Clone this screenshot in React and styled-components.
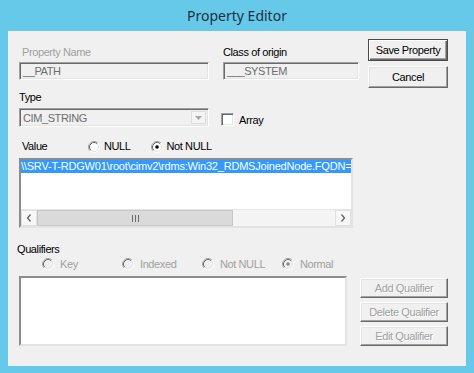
import React from "react";
import styled, { createGlobalStyle, css } from "styled-components";

const Global = createGlobalStyle`
  html, body { margin: 0; padding: 0; }
  body {
    width: 474px; height: 373px; overflow: hidden;
    background: #66c9e9;
    font-family: "Liberation Sans", Arial, sans-serif;
  }
`;

const sunken = css`
  box-sizing: border-box;
  border: 1px solid;
  border-color: #a0a0a0 #ffffff #ffffff #a0a0a0;
  box-shadow: inset 1px 1px 0 #696969, inset -1px -1px 0 #e3e3e3;
`;

const Window = styled.div`
  width: 474px; height: 373px; box-sizing: border-box;
  background: #66c9e9;
  display: flex; flex-direction: column;
  padding: 0 8px 7px 8px;
`;

const TitleBar = styled.div`
  height: 31px; box-sizing: border-box; padding-bottom: 1px;
  display: flex; align-items: center; justify-content: center;
  font-family: "Noto Sans", "Open Sans", sans-serif;
  font-size: 14px; color: #1c3140;
`;

const Client = styled.div`
  flex: 1; background: #f0f0f0;
  padding: 8px 18px 0 11px;
  display: flex; flex-direction: column;
  font-family: "Liberation Sans", Arial, sans-serif;
  font-size: 11px; letter-spacing: -0.4px; color: #000;
`;

const TopRow = styled.div`
  display: flex; align-items: flex-start;
`;

const FieldCol = styled.div`
  width: ${p => p.$w}px;
  margin-left: ${p => p.$ml || 0}px;
  margin-top: ${p => p.$mt || 0}px;
  display: flex; flex-direction: column;
`;

const Label = styled.div`
  line-height: 13px; height: 13px;
  color: ${p => (p.$disabled ? "#a0a0a0" : "#000")};
  padding-left: ${p => p.$indent || 0}px;
  margin-bottom: ${p => p.$mb ?? 3}px;
  white-space: nowrap;
`;

const TextBox = styled.div`
  ${sunken};
  height: 18px; background: #f0f0f0;
  color: #6d6d6d; line-height: 16px;
  padding: 0 3px;
  white-space: nowrap; overflow: hidden;
`;

const ButtonCol = styled.div`
  width: ${p => p.$w}px;
  margin-left: ${p => p.$ml}px;
  margin-top: ${p => p.$mt || 0}px;
  display: flex; flex-direction: column;
  gap: ${p => p.$gap}px;
`;

const Button = styled.button`
  box-sizing: border-box;
  width: 100%; height: ${p => p.$h}px;
  font: inherit; letter-spacing: inherit;
  padding: 0; margin: 0;
  background: #f0f0f0;
  color: ${p => (p.disabled ? "#a0a0a0" : "#000")};
  text-shadow: ${p => (p.disabled ? "1px 1px 0 #ffffff" : "none")};
  border: 1px solid;
  border-color: #ffffff #696969 #696969 #ffffff;
  box-shadow: inset -1px -1px 0 #a0a0a0, inset 1px 1px 0 #e3e3e3;
  ${p =>
    p.$default &&
    css`
      border-color: #4a4a4a;
      box-shadow: inset 1px 1px 0 #ffffff, inset -1px -1px 0 #696969,
        inset -2px -2px 0 #a0a0a0;
    `}
`;

const TypeRow = styled.div`
  display: flex; align-items: flex-end;
  margin-top: 3px;
`;

const Combo = styled.div`
  ${sunken};
  height: 19px; background: #f0f0f0;
  display: flex; align-items: stretch;
  padding: 2px;
`;

const ComboText = styled.div`
  flex: 1; color: #6d6d6d; line-height: 15px; padding-left: 1px;
`;

const ComboButton = styled.div`
  width: 15px; box-sizing: border-box;
  background: #f4f4f4;
  border: 1px solid #dcdcdc;
  display: flex; align-items: center; justify-content: center;
`;

const Check = styled.label`
  display: flex; align-items: center; gap: 5px;
  margin-left: 12px; margin-bottom: 1px;
`;

const CheckBox = styled.span`
  ${sunken};
  width: 13px; height: 13px; background: #ffffff; display: block;
`;

const ValueRow = styled.div`
  display: flex; align-items: center;
  margin-top: 13px; height: 13px; line-height: 13px;
  padding-left: 3px;
`;

const ValueLabel = styled.span`
  width: 66px;
`;

const Radio = styled.span`
  display: inline-flex; align-items: center; gap: ${p => p.$gap ?? 4}px;
  margin-right: ${p => p.$mr || 0}px;
  color: ${p => (p.$disabled ? "#a0a0a0" : "#000")};
  white-space: nowrap;
`;

const ValueBox = styled.div`
  box-sizing: border-box;
  margin-top: 5px;
  width: 334px; height: 70px;
  background: #ffffff;
  border: 2px solid;
  border-color: #8c8c8c #e3e3e3 #e3e3e3 #8c8c8c;
  display: flex; flex-direction: column;
`;

const ValueText = styled.div`
  flex: 1; overflow: hidden; white-space: nowrap;
`;

const Selected = styled.span`
  display: inline-block;
  background: #3399ff; color: #ffffff;
  line-height: 13px; height: 13px;
  letter-spacing: -0.2px;
`;

const HScroll = styled.div`
  height: 17px; display: flex; background: #f4f4f4;
  border-top: 1px solid #e6e6e6; box-sizing: border-box;
`;

const ScrollBtn = styled.div`
  width: 16px; box-sizing: border-box;
  border: 1px solid #e0e0e0; background: #f7f7f7;
  display: flex; align-items: center; justify-content: center;
`;

const Thumb = styled.div`
  width: 196px; box-sizing: border-box;
  background: #dadada; border: 1px solid #c6c6c6;
  display: flex; align-items: center; justify-content: center; gap: 2px;
`;

const Grip = styled.span`
  width: 1px; height: 7px; background: #6a6a6a; display: block;
`;

const Track = styled.div`
  flex: 1;
`;

const QualLabel = styled.div`
  margin-top: 15px; margin-left: -2px;
  line-height: 13px; height: 13px;
`;

const QualRadios = styled.div`
  display: grid; grid-template-columns: repeat(4, 80px);
  padding-left: 23px; margin-top: 2px;
  height: 12px; line-height: 12px;
`;

const QualRow = styled.div`
  display: flex; align-items: flex-start;
  margin-top: 6px;
`;

const ListBox = styled.div`
  box-sizing: border-box;
  width: 328px; height: 70px;
  background: #ffffff;
  border: 2px solid;
  border-color: #8c8c8c #e3e3e3 #e3e3e3 #8c8c8c;
`;

const RadioIcon = ({ checked, disabled }) => (
  <svg width="12" height="12" viewBox="0 0 12 12" style={{ display: "block" }}>
    <circle cx="6" cy="6" r="4.5" fill={disabled ? "#f0f0f0" : "#ffffff"} />
    <path d="M2.11 9.89 A5.5 5.5 0 0 1 9.89 2.11" stroke="#a0a0a0" fill="none" />
    <path d="M2.82 9.18 A4.5 4.5 0 0 1 9.18 2.82" stroke="#696969" fill="none" />
    <path d="M9.89 2.11 A5.5 5.5 0 0 1 2.11 9.89" stroke="#ffffff" fill="none" />
    <path d="M9.18 2.82 A4.5 4.5 0 0 1 2.82 9.18" stroke="#e3e3e3" fill="none" />
    {checked && <circle cx="6" cy="6" r="1.8" fill={disabled ? "#8a8a8a" : "#000000"} />}
  </svg>
);

const Chevron = ({ dir }) => (
  <svg width="6" height="8" viewBox="0 0 6 8" style={{ display: "block" }}>
    <path
      d={dir === "left" ? "M4.5 0.5 L1.5 4 L4.5 7.5" : "M1.5 0.5 L4.5 4 L1.5 7.5"}
      stroke="#5a5a5a" strokeWidth="1.2" fill="none"
    />
  </svg>
);

const DownArrow = () => (
  <svg width="7" height="4" viewBox="0 0 7 4" style={{ display: "block" }}>
    <path d="M0 0 H7 L3.5 4 Z" fill="#a6a6a6" />
  </svg>
);

export default function App() {
  return (
    <>
      <Global />
      <Window>
        <TitleBar>Property Editor</TitleBar>
        <Client>
          <TopRow>
            <FieldCol $w={190} $mt={7}>
              <Label $disabled $indent={3}>Property Name</Label>
              <TextBox>__PATH</TextBox>
            </FieldCol>
            <FieldCol $w={136} $ml={14} $mt={7}>
              <Label>Class of origin</Label>
              <TextBox>___SYSTEM</TextBox>
            </FieldCol>
            <ButtonCol $w={80} $ml={9} $gap={5}>
              <Button $h={22} $default>Save Property</Button>
              <Button $h={22}>Cancel</Button>
            </ButtonCol>
          </TopRow>

          <TypeRow>
            <FieldCol $w={190}>
              <Label $mb={4}>Type</Label>
              <Combo>
                <ComboText>CIM_STRING</ComboText>
                <ComboButton>
                  <DownArrow />
                </ComboButton>
              </Combo>
            </FieldCol>
            <Check>
              <CheckBox />
              <span>Array</span>
            </Check>
          </TypeRow>

          <ValueRow>
            <ValueLabel>Value</ValueLabel>
            <Radio $mr={20}>
              <RadioIcon />
              NULL
            </Radio>
            <Radio>
              <RadioIcon checked />
              Not NULL
            </Radio>
          </ValueRow>

          <ValueBox>
            <ValueText>
              <Selected>\\SRV-T-RDGW01\root\cimv2\rdms:Win32_RDMSJoinedNode.FQDN=</Selected>
            </ValueText>
            <HScroll>
              <ScrollBtn>
                <Chevron dir="left" />
              </ScrollBtn>
              <Thumb>
                <Grip />
                <Grip />
                <Grip />
              </Thumb>
              <Track />
              <ScrollBtn>
                <Chevron dir="right" />
              </ScrollBtn>
            </HScroll>
          </ValueBox>

          <QualLabel>Qualifiers</QualLabel>
          <QualRadios>
            <Radio $disabled $gap={6}>
              <RadioIcon disabled />
              Key
            </Radio>
            <Radio $disabled $gap={6}>
              <RadioIcon disabled />
              Indexed
            </Radio>
            <Radio $disabled $gap={6}>
              <RadioIcon disabled />
              Not NULL
            </Radio>
            <Radio $disabled $gap={6}>
              <RadioIcon disabled checked />
              Normal
            </Radio>
          </QualRadios>

          <QualRow>
            <ListBox />
            <ButtonCol $w={88} $ml={13} $mt={2} $gap={4}>
              <Button $h={20} disabled>Add Qualifier</Button>
              <Button $h={20} disabled>Delete Qualifier</Button>
              <Button $h={20} disabled>Edit Qualifier</Button>
            </ButtonCol>
          </QualRow>
        </Client>
      </Window>
    </>
  );
}
